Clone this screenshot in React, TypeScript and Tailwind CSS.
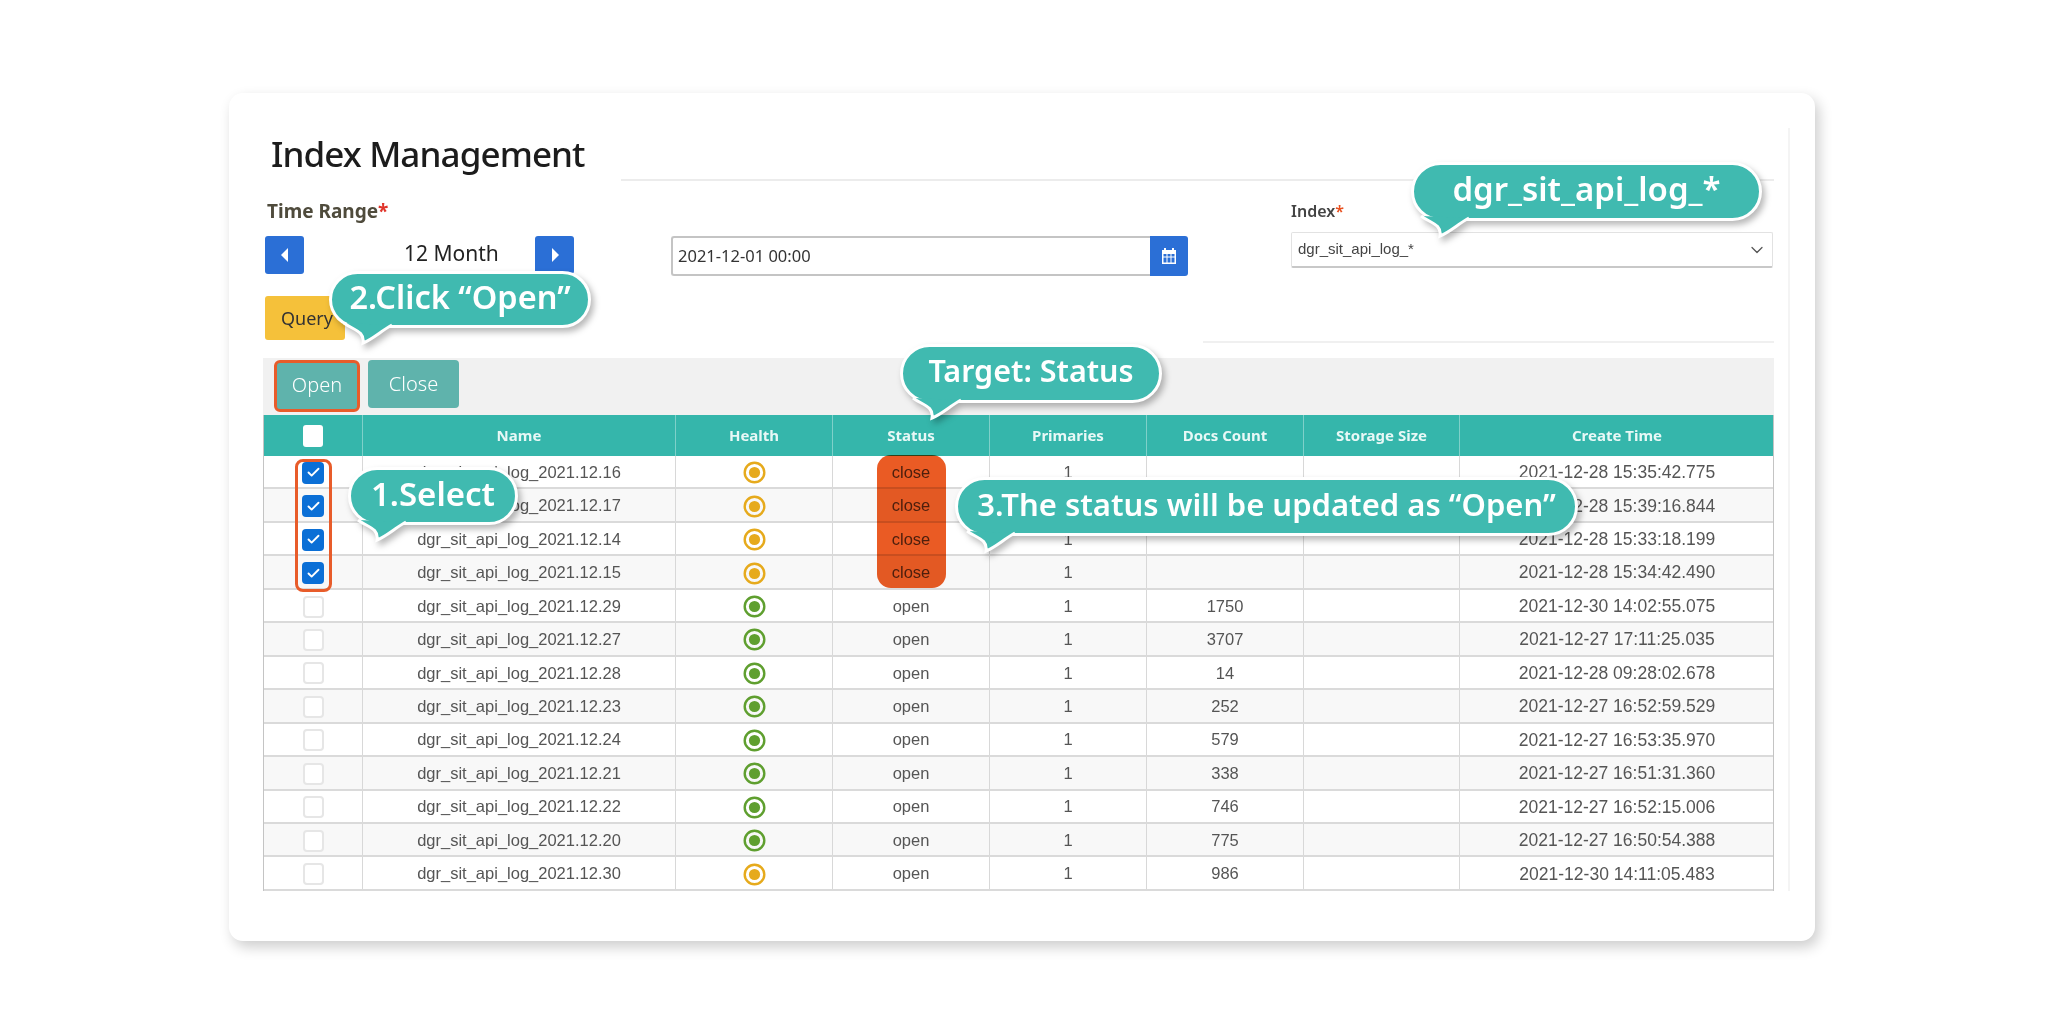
import React from "react";
import {Check, ChevronDown} from "lucide-react";

interface RowData {
    name: string;
    health: "green" | "yellow";
    status: string;
    docs: string;
    time: string;
    checked?: boolean;
}

const rows: RowData[] = [
    {name: "dgr_sit_api_log_2021.12.16", health: "yellow", status: "close", docs: "", time: "2021-12-28 15:35:42.775", checked: true},
    {name: "dgr_sit_api_log_2021.12.17", health: "yellow", status: "close", docs: "", time: "2021-12-28 15:39:16.844", checked: true},
    {name: "dgr_sit_api_log_2021.12.14", health: "yellow", status: "close", docs: "", time: "2021-12-28 15:33:18.199", checked: true},
    {name: "dgr_sit_api_log_2021.12.15", health: "yellow", status: "close", docs: "", time: "2021-12-28 15:34:42.490", checked: true},
    {name: "dgr_sit_api_log_2021.12.29", health: "green", status: "open", docs: "1750", time: "2021-12-30 14:02:55.075"},
    {name: "dgr_sit_api_log_2021.12.27", health: "green", status: "open", docs: "3707", time: "2021-12-27 17:11:25.035"},
    {name: "dgr_sit_api_log_2021.12.28", health: "green", status: "open", docs: "14", time: "2021-12-28 09:28:02.678"},
    {name: "dgr_sit_api_log_2021.12.23", health: "green", status: "open", docs: "252", time: "2021-12-27 16:52:59.529"},
    {name: "dgr_sit_api_log_2021.12.24", health: "green", status: "open", docs: "579", time: "2021-12-27 16:53:35.970"},
    {name: "dgr_sit_api_log_2021.12.21", health: "green", status: "open", docs: "338", time: "2021-12-27 16:51:31.360"},
    {name: "dgr_sit_api_log_2021.12.22", health: "green", status: "open", docs: "746", time: "2021-12-27 16:52:15.006"},
    {name: "dgr_sit_api_log_2021.12.20", health: "green", status: "open", docs: "775", time: "2021-12-27 16:50:54.388"},
    {name: "dgr_sit_api_log_2021.12.30", health: "yellow", status: "open", docs: "986", time: "2021-12-30 14:11:05.483"}
];

const gridCols = "grid grid-cols-[99px_313px_157px_157px_157px_157px_156px_314px]";
const headers = ["Name", "Health", "Status", "Primaries", "Docs Count", "Storage Size", "Create Time"];

const HealthDot = ({health}: {health: RowData["health"]}) => (
    <svg width="23" height="23" viewBox="0 0 23 23" className={health === "green" ? "text-[#5f9f2f]" : "text-[#e6aa1c]"}>
        <circle cx="11.5" cy="11.5" r="9.8" fill="none" stroke="currentColor" strokeWidth="2.4" />
        <circle cx="11.5" cy="11.5" r="5.6" fill="currentColor" />
    </svg>
);

const RowCheck = ({checked}: {checked?: boolean}) =>
    checked ? (
        <div className="flex h-[22px] w-[22px] items-center justify-center rounded-[4px] bg-[#0b6fd6]">
            <Check size={15} strokeWidth={3} className="text-white" />
        </div>
    ) : (
        <div className="h-[22px] w-[21px] rounded-[4px] border-2 border-[#e6e6e6] bg-white" />
    );

const Callout = ({box, tail, text, children}: {box: string; tail: string; text: string; children: React.ReactNode}) => (
    <div className={`absolute z-20 drop-shadow-[3px_4px_3px_rgba(0,0,0,0.28)] ${box}`}>
        <div className={`flex h-full w-full items-center justify-center rounded-[30px] border-[3px] border-white bg-[#40bab0] pb-[5px] font-['Noto_Sans',sans-serif] font-semibold whitespace-nowrap text-white ${text}`}>
            {children}
        </div>
        <svg width="50" height="24" viewBox="0 0 50 24" className={`absolute top-full -mt-[6px] ${tail}`}>
            <path
                d="M1 1 C10 8 22 9 20 21 C30 17 38 9 49 3"
                fill="#40bab0"
                stroke="white"
                strokeWidth="3"
            />
        </svg>
    </div>
);

const App = () => {
    return (
        <div className="h-[1033px] w-[2048px] overflow-hidden bg-white pt-[93px] pl-[229px] font-['Liberation_Sans',sans-serif]">
            <div className="relative flex h-[848px] w-[1586px] items-start rounded-[14px] bg-white pl-[34px] shadow-[4px_6px_14px_rgba(0,0,0,0.2)]">
                <div className="w-[1511px]">
                    <div className="flex h-[88px]">
                        <div className="w-[358px] pt-[37px] pl-2 font-['Noto_Sans',sans-serif] text-[35px] leading-[48px] font-medium tracking-[-0.9px] whitespace-nowrap text-[#1c1c1c]">
                            Index Management
                        </div>
                        <div className="flex-1 border-b-2 border-[#ececec]" />
                    </div>

                    <div className="flex h-[160px]">
                        <div className="w-[408px] pt-[19px] pl-[2px]">
                            <div className="ml-[2px] h-[22px] font-['Noto_Sans',sans-serif] text-[19px] leading-[22px] font-bold text-[#4f4b3c]">
                                Time Range<span className="text-[#e0352b]">*</span>
                            </div>
                            <div className="mt-[14px] flex h-[38px] w-[309px] items-center">
                                <div className="flex h-full w-[39px] items-center justify-center rounded-[3px] bg-[#2b6fd6]">
                                    <svg width="8" height="14" viewBox="0 0 8 14"><path d="M7 0 V14 L0 7 Z" fill="white" /></svg>
                                </div>
                                <span className="ml-[100px] pb-[3px] font-['Noto_Sans',sans-serif] text-[21px] text-[#222]">12 Month</span>
                                <div className="ml-auto flex h-full w-[39px] items-center justify-center rounded-[3px] bg-[#2b6fd6]">
                                    <svg width="8" height="14" viewBox="0 0 8 14"><path d="M1 0 V14 L8 7 Z" fill="white" /></svg>
                                </div>
                            </div>
                            <div className="mt-[22px] flex h-[44px] w-[80px] items-center rounded-[3px] bg-[#f5c13a] pl-4 font-['Noto_Sans',sans-serif] text-[18px] text-[#333]">
                                Query
                            </div>
                        </div>

                        <div className="mt-[55px] flex h-10 w-[517px]">
                            <div className="flex flex-1 items-center rounded-l-[3px] border-2 border-r-0 border-[#c4c4c4] pl-[5px] font-['Noto_Sans',sans-serif] text-[16.5px] text-[#333]">
                                2021-12-01 00:00
                            </div>
                            <div className="flex w-[38px] items-center justify-center rounded-r-[3px] bg-[#2b6fd6]">
                                <svg width="14" height="16" viewBox="0 0 14 16" fill="white">
                                    <path d="M2 0h2v2h6V0h2v2h2v14H0V2h2zM1.5 6v2.5h3V6zm4 0v2.5h3V6zm4 0v2.5h3V6zm-8 3.5v5h3v-5zm4 0v5h3v-5zm4 0v5h3v-5z" fillRule="evenodd" />
                                </svg>
                            </div>
                        </div>

                        <div className="ml-[103px] w-[482px] pt-[19px]">
                            <div className="h-[22px] font-['Noto_Sans',sans-serif] text-[16px] leading-[22px] font-semibold text-[#444]">
                                Index<span className="text-[#e8501f]">*</span>
                            </div>
                            <div className="mt-[10px] flex h-[36px] items-center justify-between rounded-[2px] border border-[#e2e2e2] border-b-2 border-b-[#c8c8c8] pr-[5px] pl-[6px] text-[15px] text-[#444]">
                                dgr_sit_api_log_*
                                <ChevronDown size={20} strokeWidth={1.5} className="text-[#555]" />
                            </div>
                        </div>
                    </div>

                    <div className="flex justify-end">
                        <div className="w-[571px] border-b-2 border-[#f0f0f0]" />
                    </div>

                    <div className="mt-[15px] flex h-[57px] items-start gap-2 bg-[#f1f1f1] pt-[2px] pl-[11px]">
                        <div className="flex h-[52px] w-[86px] items-center justify-center rounded-[6px] border-[3px] border-[#e85c2a] bg-[#5fb3ac] pb-[2px] font-['Noto_Sans',sans-serif] text-[20px] font-light text-white">
                            Open
                        </div>
                        <div className="flex h-[48px] w-[91px] items-center justify-center rounded-[4px] bg-[#5fb3ac] font-['Noto_Sans',sans-serif] text-[20px] font-light text-white">
                            Close
                        </div>
                    </div>

                    <div className="border-x border-x-[#c4c4c4]">
                        <div className={`${gridCols} h-[41px] bg-[#35b6ab] font-['Noto_Sans',sans-serif] text-[15px] font-bold text-[#e8f8f6]`}>
                            <div className="flex items-center justify-center border-r border-[#7fd0c9]">
                                <div className="h-[22px] w-[20px] rounded-[3px] bg-white" />
                            </div>
                            {headers.map((header, i) => (
                                <div
                                    key={header}
                                    className={`flex items-center justify-center ${i < headers.length - 1 ? "border-r border-[#7fd0c9]" : ""}`}>
                                    {header}
                                </div>
                            ))}
                        </div>
                        {rows.map((row, i) => (
                            <div
                                key={row.name}
                                className={`${gridCols} h-[33.46px] border-b-2 border-[#dadada] text-[#555] ${i % 2 === 0 ? "bg-white" : "bg-[#f8f8f8]"}`}>
                                <div className="flex items-center justify-center border-r border-[#d8d8d8] pt-[2px]">
                                    <RowCheck checked={row.checked} />
                                </div>
                                <div className="flex items-center justify-center border-r border-[#d8d8d8] pt-[1px] text-[16.5px]">{row.name}</div>
                                <div className="flex items-center justify-center border-r border-[#d8d8d8] pt-[2px]">
                                    <HealthDot health={row.health} />
                                </div>
                                <div className="flex items-center justify-center border-r border-[#d8d8d8] pt-[1px] text-[16.5px]">{row.status}</div>
                                <div className="flex items-center justify-center border-r border-[#d8d8d8] pt-[1px] text-[16.5px]">1</div>
                                <div className="flex items-center justify-center border-r border-[#d8d8d8] pt-[1px] text-[16.5px]">{row.docs}</div>
                                <div className="border-r border-[#d8d8d8]" />
                                <div className="flex items-center justify-center pt-[1px] text-[17.5px]">{row.time}</div>
                            </div>
                        ))}
                    </div>
                </div>
                <div className="mt-[35px] h-[763px] w-[16px] border-r-2 border-[#f4f4f4]" />

                {/* annotations on top of the table */}
                <div className="absolute top-[366px] left-[66px] z-10 h-[133px] w-[37px] rounded-[8px] border-[3px] border-[#e85c2a]" />
                <div className="absolute top-[362px] left-[648px] z-10 h-[133px] w-[69px] rounded-[14px] bg-[#ea5b24] mix-blend-multiply" />

                <Callout box="left-[1182px] top-[69px] h-[59px] w-[351px]" tail="left-[9px]" text="text-[33px]">dgr_sit_api_log_*</Callout>
                <Callout box="left-[100px] top-[178px] h-[57px] w-[262px]" tail="left-[14px]" text="text-[32.5px]">2.Click “Open”</Callout>
                <Callout box="left-[671px] top-[251px] h-[59px] w-[262px]" tail="left-[12px]" text="text-[30.5px]">Target: Status</Callout>
                <Callout box="left-[119px] top-[374px] h-[58px] w-[170px]" tail="left-[9px]" text="text-[33px]">1.Select</Callout>
                <Callout box="left-[726px] top-[384px] h-[59px] w-[623px]" tail="left-[11px]" text="text-[31px]">3.The status will be updated as “Open”</Callout>
            </div>
        </div>
    );
};

export default App;
